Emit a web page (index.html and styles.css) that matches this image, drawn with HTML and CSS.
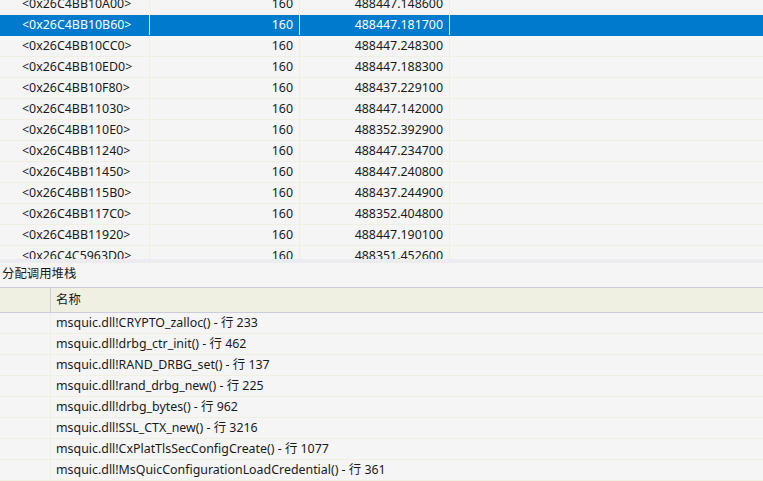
FILE: index.html
```html
<!DOCTYPE html>
<html lang="zh-CN">
<head>
    <meta charset="UTF-8">
    <meta name="viewport" content="width=device-width, initial-scale=1.0">
    <title>内存使用情况</title>
    <link rel="stylesheet" href="styles.css">
</head>
<body>
    <div class="instances">
        <div class="instance-list">
            <div class="row"><div class="cell addr">&lt;0x26C4BB10A00&gt;</div><div class="cell num">160</div><div class="cell num">488447.148600</div><div class="cell"></div></div>
            <div class="row selected"><div class="cell addr">&lt;0x26C4BB10B60&gt;</div><div class="cell num">160</div><div class="cell num">488447.181700</div><div class="cell"></div></div>
            <div class="row"><div class="cell addr">&lt;0x26C4BB10CC0&gt;</div><div class="cell num">160</div><div class="cell num">488447.248300</div><div class="cell"></div></div>
            <div class="row"><div class="cell addr">&lt;0x26C4BB10ED0&gt;</div><div class="cell num">160</div><div class="cell num">488447.188300</div><div class="cell"></div></div>
            <div class="row"><div class="cell addr">&lt;0x26C4BB10F80&gt;</div><div class="cell num">160</div><div class="cell num">488437.229100</div><div class="cell"></div></div>
            <div class="row"><div class="cell addr">&lt;0x26C4BB11030&gt;</div><div class="cell num">160</div><div class="cell num">488447.142000</div><div class="cell"></div></div>
            <div class="row"><div class="cell addr">&lt;0x26C4BB110E0&gt;</div><div class="cell num">160</div><div class="cell num">488352.392900</div><div class="cell"></div></div>
            <div class="row"><div class="cell addr">&lt;0x26C4BB11240&gt;</div><div class="cell num">160</div><div class="cell num">488447.234700</div><div class="cell"></div></div>
            <div class="row"><div class="cell addr">&lt;0x26C4BB11450&gt;</div><div class="cell num">160</div><div class="cell num">488447.240800</div><div class="cell"></div></div>
            <div class="row"><div class="cell addr">&lt;0x26C4BB115B0&gt;</div><div class="cell num">160</div><div class="cell num">488437.244900</div><div class="cell"></div></div>
            <div class="row"><div class="cell addr">&lt;0x26C4BB117C0&gt;</div><div class="cell num">160</div><div class="cell num">488352.404800</div><div class="cell"></div></div>
            <div class="row"><div class="cell addr">&lt;0x26C4BB11920&gt;</div><div class="cell num">160</div><div class="cell num">488447.190100</div><div class="cell"></div></div>
            <div class="row"><div class="cell addr">&lt;0x26C4C5963D0&gt;</div><div class="cell num">160</div><div class="cell num">488351.452600</div><div class="cell"></div></div>
        </div>
    </div>

    <div class="splitter"></div>

    <div class="stack-panel">
        <div class="panel-title">分配调用堆栈</div>
        <div class="stack-grid">
            <div class="stack-head"><div class="scell blank"></div><div class="scell name">名称</div></div>
            <div class="stack-row"><div class="scell blank"></div><div class="scell name">msquic.dll!CRYPTO_zalloc() - 行 233</div></div>
            <div class="stack-row"><div class="scell blank"></div><div class="scell name">msquic.dll!drbg_ctr_init() - 行 462</div></div>
            <div class="stack-row"><div class="scell blank"></div><div class="scell name">msquic.dll!RAND_DRBG_set() - 行 137</div></div>
            <div class="stack-row"><div class="scell blank"></div><div class="scell name">msquic.dll!rand_drbg_new() - 行 225</div></div>
            <div class="stack-row"><div class="scell blank"></div><div class="scell name">msquic.dll!drbg_bytes() - 行 962</div></div>
            <div class="stack-row"><div class="scell blank"></div><div class="scell name">msquic.dll!SSL_CTX_new() - 行 3216</div></div>
            <div class="stack-row"><div class="scell blank"></div><div class="scell name">msquic.dll!CxPlatTlsSecConfigCreate() - 行 1077</div></div>
            <div class="stack-row"><div class="scell blank"></div><div class="scell name">msquic.dll!MsQuicConfigurationLoadCredential() - 行 361</div></div>
        </div>
    </div>
</body>
</html>
```

FILE: styles.css
```css
body {
    margin: 0;
    background: #f5f5f5;
    font-family: 'Noto Sans', 'Noto Sans CJK SC', sans-serif;
    font-size: 12.4px;
    color: #1a1a1a;
    overflow: hidden;
}

/* 上方实例列表 */
.instances {
    height: 259px;
    overflow: hidden;
}

.instance-list {
    margin-top: -6px;
}

.row {
    display: grid;
    grid-template-columns: 150px 150px 150px 1fr;
    height: 21px;
    box-sizing: border-box;
    border-bottom: 1px solid #efefe2;
}

.cell {
    box-sizing: border-box;
    border-right: 1px solid #efefe2;
    line-height: 20px;
    white-space: nowrap;
    overflow: hidden;
}

.cell:last-child {
    border-right: none;
}

.addr {
    padding-left: 22px;
}

.num {
    text-align: right;
    padding-right: 6px;
}

.row.selected {
    background: #007acc;
    color: #fff;
    border-bottom-color: #007acc;
}

.row.selected .cell {
    border-right-color: #e8f0f4;
}

.row.selected .cell:last-child {
    border-right: none;
}

.splitter {
    height: 4px;
    background: #ececf0;
}

/* 分配调用堆栈 */
.panel-title {
    height: 24px;
    line-height: 22px;
    padding-left: 2px;
}

.stack-head,
.stack-row {
    display: grid;
    grid-template-columns: 51px 1fr;
    box-sizing: border-box;
}

.stack-head {
    height: 26px;
    background: #efefe2;
    border-top: 1px solid #ccccdc;
    border-bottom: 1px solid #ccccdc;
}

.stack-head .scell {
    line-height: 24px;
}

.stack-head .blank {
    border-right: 1px solid #ccccdc;
}

.stack-row {
    height: 21px;
    border-bottom: 1px solid #efefe2;
}

.scell {
    box-sizing: border-box;
    line-height: 20px;
    white-space: nowrap;
}

.stack-row .blank {
    border-right: 1px solid #efefe2;
}

.name {
    padding-left: 5px;
}
```
